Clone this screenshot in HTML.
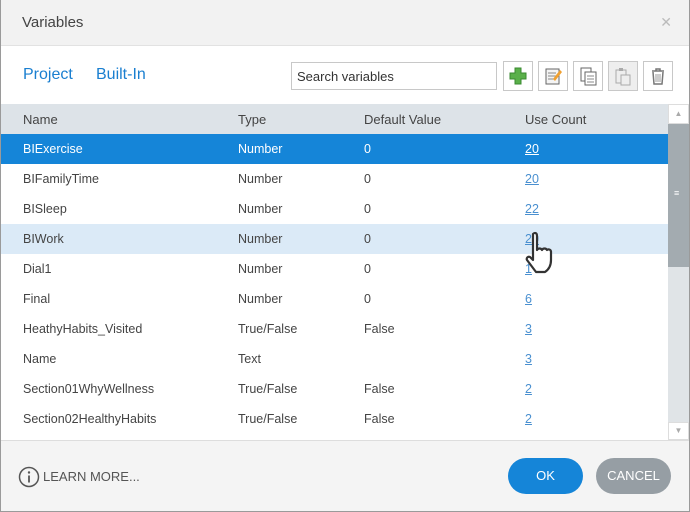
<!DOCTYPE html>
<html><head><style>
*{margin:0;padding:0;box-sizing:border-box}
body{width:690px;height:512px;font-family:"Liberation Sans",sans-serif;background:#fff;position:relative;overflow:hidden}
.frame{position:absolute;left:0;top:0;width:690px;height:512px;border:1px solid #9a9a9a;border-top:none}
.title{position:absolute;left:0;top:0;width:690px;height:46px;background:#f2f2f2;border-bottom:1px solid #e2e2e2}
.title span{position:absolute;left:22px;top:14px;font-size:15px;color:#444}
.title i{position:absolute;right:18px;top:14px;font-style:normal;color:#bbb;font-size:14px}
.tab{position:absolute;top:66px;font-size:16px;color:#1a7fd0}
.search{position:absolute;left:291px;top:62px;width:206px;height:28px;border:1px solid #c8c8c8;font-size:13px;color:#333;padding:6px 5px}
.btn{position:absolute;top:61px;width:30px;height:30px;border:1px solid #c8c8c8;background:#fff}
.hdr{position:absolute;left:1px;top:104px;width:667px;height:30px;background:#dde3e8;font-size:13px;color:#444}
.row{position:absolute;left:1px;width:667px;height:30px;font-size:12.5px;color:#444}
.c{position:absolute;top:8px}
.u{text-decoration:underline;color:#4a90d0}
.sel{background:#1585d8;color:#fff}
.sel .u{color:#fff}
.hov{background:#dbeaf7}
.sb{position:absolute;left:668px;top:104px;width:21px;height:336px;background:#e0e4e7}
.foot{position:absolute;left:1px;top:440px;width:688px;height:71px;background:#f4f4f4;border-top:1px solid #ddd}
.pill{position:absolute;top:458px;width:75px;height:36px;border-radius:18px;color:#fff;font-size:13px;text-align:center;line-height:36px}
</style></head><body>
<div class="title"><span>Variables</span><i>✕</i></div>
<div class="tab" style="left:23px">Project</div>
<div class="tab" style="left:96px">Built-In</div>
<div class="search">Search variables</div>
<div class="btn" style="left:503px"><svg width="28" height="28"><path d="M11 6h6v5h5v6h-5v5h-6v-5H6v-6h5z" fill="#5ab04a" stroke="#3a8a30"/></svg></div>
<div class="btn" style="left:538px"><svg width="28" height="28"><rect x="7" y="7" width="13" height="15" fill="#f4f4f4" stroke="#666"/><path d="M9 11h8M9 14h8M9 17h6" stroke="#888"/><path d="M14 17l7-9 2 2-7 9z" fill="#f0a030"/></svg></div>
<div class="btn" style="left:573px"><svg width="28" height="28"><rect x="7" y="6" width="10" height="13" fill="#fff" stroke="#666"/><rect x="11" y="10" width="11" height="13" fill="#fff" stroke="#666"/><path d="M13 14h7M13 17h7M13 20h7" stroke="#888"/></svg></div>
<div class="btn" style="left:608px;background:#eee"><svg width="28" height="28"><rect x="7" y="8" width="10" height="13" fill="none" stroke="#aaa"/><rect x="12" y="13" width="9" height="10" fill="#eee" stroke="#aaa"/><rect x="10" y="6" width="4" height="3" fill="#aaa"/></svg></div>
<div class="btn" style="left:643px"><svg width="28" height="28"><path d="M8 9h12M12 9V7h4v2M9 10l1 12h8l1-12" fill="none" stroke="#777" stroke-width="1.5"/><path d="M12 12v8M14 12v8M16 12v8" stroke="#999"/></svg></div>
<div class="hdr"><span class="c" style="left:22px">Name</span><span class="c" style="left:237px">Type</span><span class="c" style="left:363px">Default Value</span><span class="c" style="left:524px">Use Count</span></div>
<div class="row sel" style="top:134px"><span class="c" style="left:22px">BIExercise</span><span class="c" style="left:237px">Number</span><span class="c" style="left:363px">0</span><span class="c u" style="left:524px">20</span></div>
<div class="row" style="top:164px"><span class="c" style="left:22px">BIFamilyTime</span><span class="c" style="left:237px">Number</span><span class="c" style="left:363px">0</span><span class="c u" style="left:524px">20</span></div>
<div class="row" style="top:194px"><span class="c" style="left:22px">BISleep</span><span class="c" style="left:237px">Number</span><span class="c" style="left:363px">0</span><span class="c u" style="left:524px">22</span></div>
<div class="row hov" style="top:224px"><span class="c" style="left:22px">BIWork</span><span class="c" style="left:237px">Number</span><span class="c" style="left:363px">0</span><span class="c u" style="left:524px">20</span></div>
<div class="row" style="top:254px"><span class="c" style="left:22px">Dial1</span><span class="c" style="left:237px">Number</span><span class="c" style="left:363px">0</span><span class="c u" style="left:524px">1</span></div>
<div class="row" style="top:284px"><span class="c" style="left:22px">Final</span><span class="c" style="left:237px">Number</span><span class="c" style="left:363px">0</span><span class="c u" style="left:524px">6</span></div>
<div class="row" style="top:314px"><span class="c" style="left:22px">HeathyHabits_Visited</span><span class="c" style="left:237px">True/False</span><span class="c" style="left:363px">False</span><span class="c u" style="left:524px">3</span></div>
<div class="row" style="top:344px"><span class="c" style="left:22px">Name</span><span class="c" style="left:237px">Text</span><span class="c u" style="left:524px">3</span></div>
<div class="row" style="top:374px"><span class="c" style="left:22px">Section01WhyWellness</span><span class="c" style="left:237px">True/False</span><span class="c" style="left:363px">False</span><span class="c u" style="left:524px">2</span></div>
<div class="row" style="top:404px"><span class="c" style="left:22px">Section02HealthyHabits</span><span class="c" style="left:237px">True/False</span><span class="c" style="left:363px">False</span><span class="c u" style="left:524px">2</span></div>
<svg style="position:absolute;left:520px;top:230px" width="40" height="52"><path d="M13 4c2-2 4-1 4 2v14c1-2 4-2 5 0 1-2 4-2 5 0 1-1 4-1 4 2v8c0 6-3 10-6 12h-9l-9-12c-1-2 1-4 3-3l3 3V6z" fill="#fff" stroke="#333" stroke-width="2.2" stroke-linejoin="round"/></svg>
<div class="sb"><div style="height:20px;background:#fff;border:1px solid #ddd;font-size:8px;color:#aaa;text-align:center;line-height:18px">▲</div><div style="position:absolute;top:20px;width:21px;height:143px;background:#a3abb0"></div><div style="position:absolute;top:84px;left:6px;color:#fff;font-size:9px">≡</div><div style="position:absolute;bottom:0;width:21px;height:18px;background:#fff;border:1px solid #ddd;font-size:8px;color:#aaa;text-align:center;line-height:16px">▼</div></div>
<div class="foot"></div>
<svg style="position:absolute;left:18px;top:466px" width="22" height="22"><circle cx="11" cy="11" r="9.5" fill="none" stroke="#555" stroke-width="1.5"/><circle cx="11" cy="6.5" r="1.2" fill="#555"/><path d="M11 9.5v7" stroke="#555" stroke-width="1.8"/></svg>
<div style="position:absolute;left:43px;top:469px;font-size:13px;color:#555">LEARN MORE...</div>
<div class="pill" style="left:508px;background:#1585d8">OK</div>
<div class="pill" style="left:596px;background:#969ea4">CANCEL</div>
<div class="frame"></div>
</body></html>
